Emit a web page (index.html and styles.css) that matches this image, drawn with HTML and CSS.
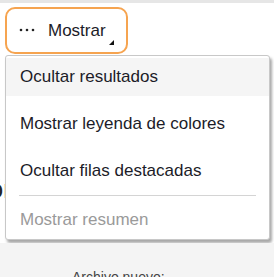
FILE: index.html
```html
<!DOCTYPE html>
<html lang="es">
<head>
    <meta charset="UTF-8">
    <title>Opciones de vista</title>
    <link rel="stylesheet" href="styles.css">
</head>
<body>
    <div class="topbar"></div>

    <div class="workspace">
        <div class="toolbar">
            <button class="options-btn" id="optionsButton">
                <svg class="dots" width="16" height="4" viewBox="0 0 16 4">
                    <circle cx="2" cy="2" r="1.3" fill="#222"/>
                    <circle cx="8" cy="2" r="1.3" fill="#222"/>
                    <circle cx="14" cy="2" r="1.3" fill="#222"/>
                </svg>
                <span>Mostrar</span>
            </button>
        </div>

        <h2 class="side-title">Versión</h2>

        <div class="menu" id="optionsMenu">
            <div class="menu-item active">Ocultar resultados</div>
            <div class="menu-item">Mostrar leyenda de colores</div>
            <div class="menu-item">Ocultar filas destacadas</div>
            <div class="menu-sep"></div>
            <div class="menu-item disabled">Mostrar resumen</div>
        </div>
    </div>

    <div class="footer">
        <div class="file-label">Archivo nuevo:</div>
    </div>
</body>
</html>
```

FILE: styles.css
```css
body {
    margin: 0;
    font-family: "Liberation Sans", Arial, sans-serif;
    color: #222;
    background: #f4f4f4;
}

.topbar {
    height: 3px;
    background: #e6e6e6;
}

.workspace {
    position: relative;
    height: 240px;
    background: #ffffff;
    overflow: hidden;
}

.toolbar {
    padding: 4px 0 0 5px;
}

.options-btn {
    position: relative;
    display: inline-flex;
    align-items: center;
    gap: 13px;
    box-sizing: border-box;
    width: 123px;
    height: 47px;
    padding: 0 0 0 12px;
    border: 2.5px solid #f6a450;
    border-radius: 10px;
    background: #ffffff;
    font-family: inherit;
    font-size: 17px;
    color: #1c1c28;
    cursor: pointer;
}

.options-btn::after {
    content: "";
    position: absolute;
    right: 12px;
    bottom: 7px;
    width: 0;
    height: 0;
    border-left: 5px solid transparent;
    border-bottom: 5px solid #111;
}

.dots {
    display: block;
    margin-top: -2px;
}

.side-title {
    margin: 120px 0 0 -69px;
    font-size: 26px;
    font-weight: normal;
    line-height: 30px;
    white-space: nowrap;
    color: #222;
}

.menu {
    position: absolute;
    top: 52px;
    left: 5px;
    width: 265px;
    box-sizing: border-box;
    padding-top: 2px;
    border: 1px solid #c8c8c8;
    border-radius: 3px;
    background: #ffffff;
    box-shadow: 2px 3px 3px rgba(0, 0, 0, 0.35);
    display: flex;
    flex-direction: column;
    gap: 9px;
}

.menu-item {
    height: 38px;
    line-height: 38px;
    padding: 0 14px;
    font-size: 17px;
    color: #1c1c28;
    cursor: pointer;
}

.menu-item.active {
    background: #f5f5f5;
}

.menu-item.disabled {
    color: #9a9a9a;
    cursor: default;
}

.menu-sep {
    height: 1px;
    margin: -4px 13px;
    background: #d4d4d4;
}

.footer {
    padding: 26px 0 0 72px;
}

.file-label {
    font-size: 14px;
    color: #444;
}
```
